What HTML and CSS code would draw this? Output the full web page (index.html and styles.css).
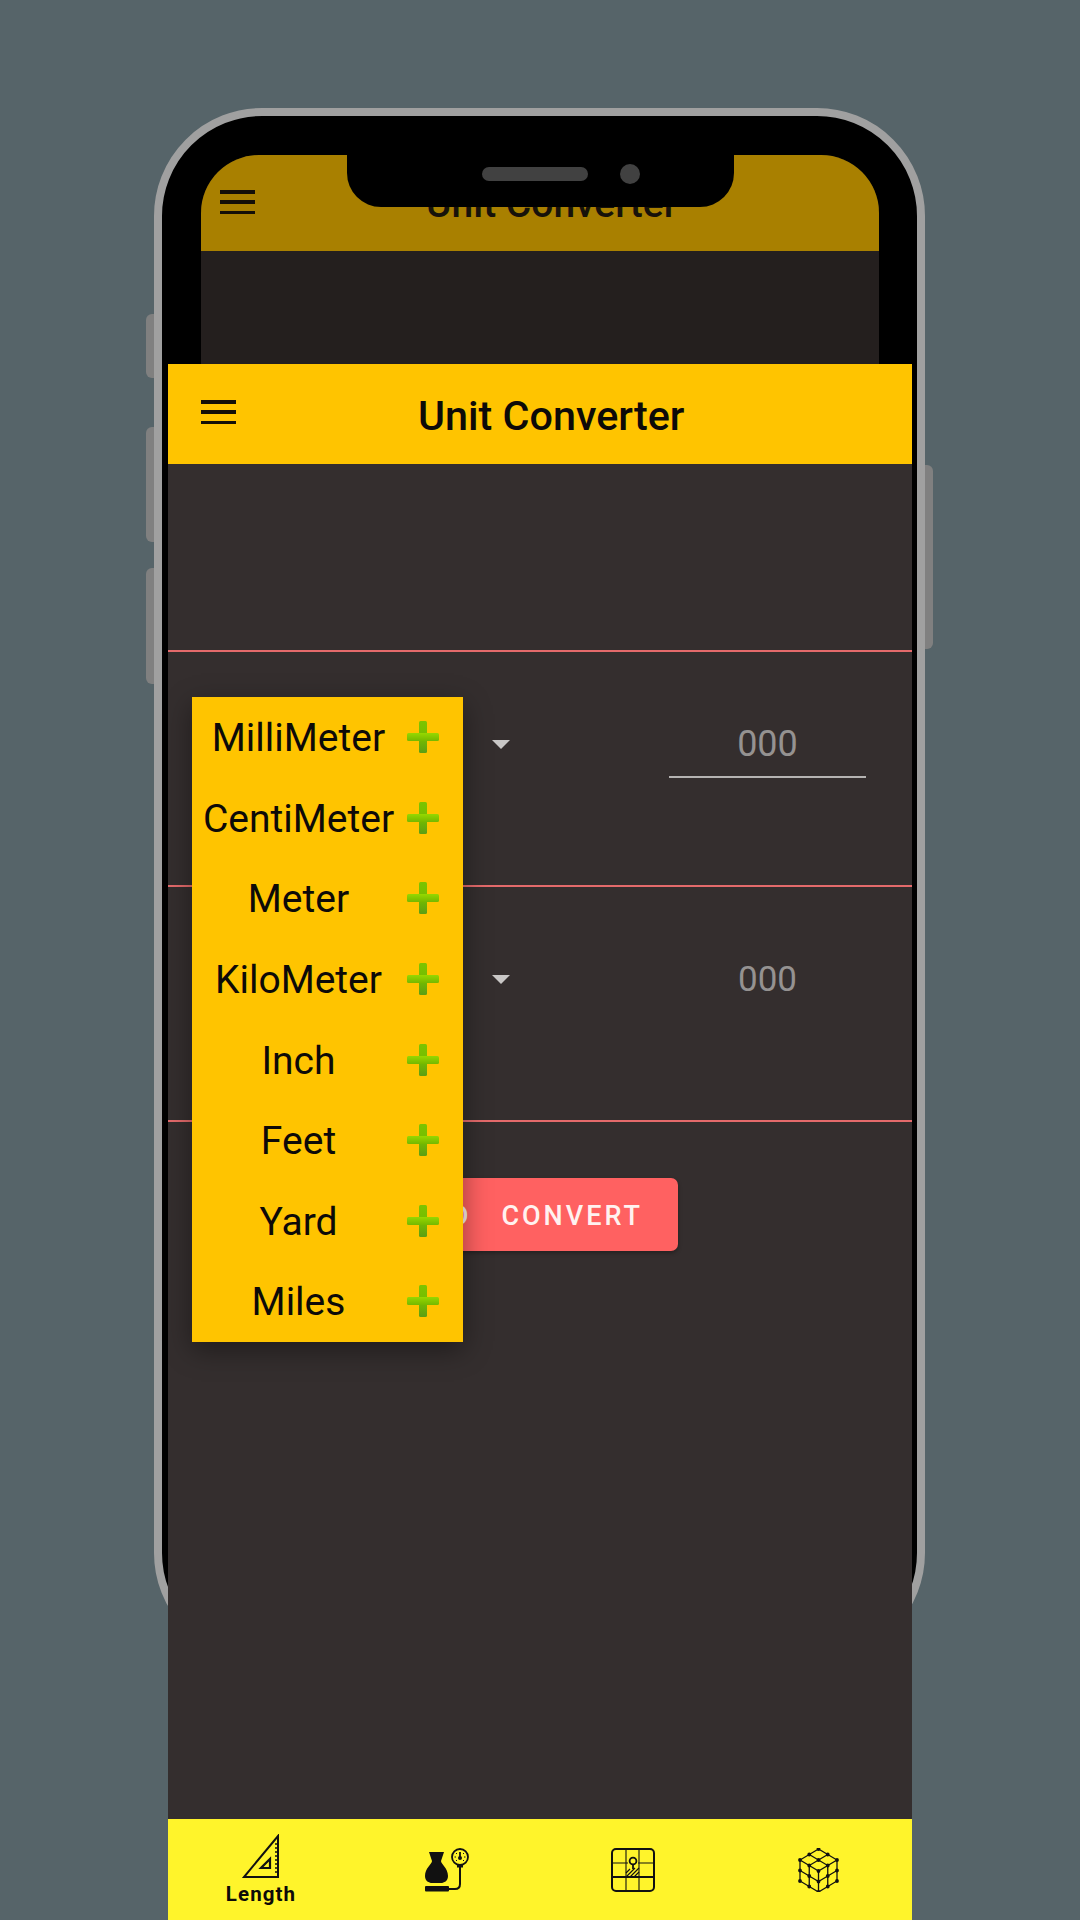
FILE: index.html

```html
<!DOCTYPE html>
<html lang="en">
<head>
    <meta charset="UTF-8">
    <meta name="viewport" content="width=device-width, initial-scale=1.0">
    <title>Unit Converter</title>
    <link rel="stylesheet" href="styles.css">
</head>
<body>
    <svg class="defs" width="0" height="0">
        <defs>
            <linearGradient id="plusV" x1="0" y1="0" x2="0" y2="1">
                <stop offset="0" stop-color="#7cc400"/>
                <stop offset="0.55" stop-color="#74bc00"/>
                <stop offset="1" stop-color="#5c9e14"/>
            </linearGradient>
            <linearGradient id="plusH" x1="0" y1="0" x2="0" y2="1">
                <stop offset="0" stop-color="#96d800"/>
                <stop offset="1" stop-color="#74b800"/>
            </linearGradient>
            <symbol id="plus" viewBox="0 0 32 32">
                <rect x="12" y="0" width="8" height="32" rx="1.5" fill="url(#plusV)"/>
                <rect x="0" y="12" width="32" height="8" rx="1.5" fill="url(#plusH)"/>
            </symbol>
        </defs>
    </svg>

    <span class="side-btn side-btn-mute"></span>
    <span class="side-btn side-btn-up"></span>
    <span class="side-btn side-btn-down"></span>
    <span class="side-btn side-btn-power"></span>

    <div class="phone">
        <div class="old-screen">
            <div class="old-bar">
                <div class="burger old-burger"><i></i><i></i><i></i></div>
                <div class="old-title">Unit Converter</div>
            </div>
        </div>
        <div class="notch">
            <span class="speaker"></span>
            <span class="camera"></span>
        </div>
    </div>

    <div class="app">
        <header class="app-bar">
            <div class="burger"><i></i><i></i><i></i></div>
            <h1 class="app-title">Unit Converter</h1>
        </header>

        <main class="content">
            <div class="unit-row">
                <span class="spin-arrow"></span>
                <div class="value value-edit">000</div>
            </div>
            <div class="unit-row">
                <span class="spin-arrow"></span>
                <div class="value">000</div>
            </div>
            <div class="unit-row unit-row-last">
                <button class="convert-btn"><span>ADD</span><span>CONVERT</span></button>
            </div>
        </main>

        <ul class="unit-menu">
            <li><span>MilliMeter</span><svg class="plus"><use href="#plus"/></svg></li>
            <li><span>CentiMeter</span><svg class="plus"><use href="#plus"/></svg></li>
            <li><span>Meter</span><svg class="plus"><use href="#plus"/></svg></li>
            <li><span>KiloMeter</span><svg class="plus"><use href="#plus"/></svg></li>
            <li><span>Inch</span><svg class="plus"><use href="#plus"/></svg></li>
            <li><span>Feet</span><svg class="plus"><use href="#plus"/></svg></li>
            <li><span>Yard</span><svg class="plus"><use href="#plus"/></svg></li>
            <li><span>Miles</span><svg class="plus"><use href="#plus"/></svg></li>
        </ul>

        <nav class="bottom-nav">
            <div class="nav-item">
                <svg class="nav-icon" viewBox="0 0 44 44">
                    <path d="M39 2V43H5Z" fill="none" stroke="#111" stroke-width="2"/>
                    <path d="M31 25V34H22Z" fill="none" stroke="#111" stroke-width="2.2"/>
                    <path d="M36 10h3M36 14h3M36 18h3M36 22h3M36 26h3M36 30h3M36 34h3M36 38h3" stroke="#111" stroke-width="1.5"/>
                </svg>
                <span class="nav-label">Length</span>
            </div>
            <div class="nav-item">
                <svg class="nav-icon" viewBox="0 0 44 44">
                    <path d="M4 4H19L16 13C16 16 23 20 23 28C23 33 19 35 16 35H7C4 35 0 33 0 28C0 20 7 16 7 13Z" fill="#111"/>
                    <rect x="0" y="38" width="24" height="5.500" rx="1" fill="#111"/>
                    <path d="M23 41H30C33 41 35 39 35 36V19" fill="none" stroke="#111" stroke-width="2"/>
                    <circle cx="35" cy="9" r="8" fill="none" stroke="#111" stroke-width="1.8"/>
                    <path d="M35 4V9" stroke="#111" stroke-width="1.8"/>
                    <circle cx="35" cy="10" r="2" fill="#111"/>
                    <path d="M29.500 9h1.500M39 9h1.500M31 5l1 1M39 5l-1 1M31 13l1-1M39 13l-1-1" stroke="#111" stroke-width="1"/>
                    <rect x="32" y="17" width="6" height="2.500" fill="#111"/>
                </svg>
            </div>
            <div class="nav-item">
                <svg class="nav-icon" viewBox="0 0 44 44">
                    <path d="M15 25l4-4M15 29l9-9M19 29l9-9M23 29l5-5" stroke="#111" stroke-width="1.2"/>
                    <path d="M15 1V43M28 1V43M1 15H17M27 15H43" fill="none" stroke="#111" stroke-width="1.1"/>
                    <path d="M1 29H43" stroke="#111" stroke-width="1.8"/>
                    <rect x="1" y="1" width="42" height="42" rx="4" fill="none" stroke="#111" stroke-width="2"/>
                    <circle cx="22" cy="13" r="3.400" fill="#fff42b" stroke="#111" stroke-width="1.8"/>
                    <path d="M22 16.500V21" stroke="#111" stroke-width="1.8"/>
                </svg>
            </div>
            <div class="nav-item">
                <svg class="nav-icon" viewBox="0 0 44 44">
                    <path d="M21.500 1L3 12V33L21.500 44L40 33V12ZM30.750 6.500L12.250 17.500V38.500M40 12L21.500 23V44M12.250 6.500L30.750 17.500V38.500M3 12L21.500 23L40 12M3 22.500L21.500 33.500L40 22.500" fill="none" stroke="#111" stroke-width="1.3"/>
                    <path d="M21.500 1h0M30.750 6.500h0M40 12h0M12.250 6.500h0M21.500 12h0M3 12h0M30.750 17.500h0M12.250 17.500h0M21.500 23h0M3 22.500h0M12.250 28h0M21.500 33.500h0M30.750 28h0M40 22.500h0M3 33h0M12.250 38.500h0M21.500 44h0M30.750 38.500h0M40 33h0" stroke="#111" stroke-width="3.800" stroke-linecap="round"/>
                </svg>
            </div>
        </nav>
    </div>
</body>
</html>
```

FILE: styles.css

```css
* {
    box-sizing: border-box;
}
html, body {
    margin: 0;
    padding: 0;
}
body {
    position: relative;
    width: 1080px;
    height: 1920px;
    overflow: hidden;
    background-color: #566469;
    font-family: Roboto, "Liberation Sans", sans-serif;
    color: #0d0a08;
}
.defs {
    position: absolute;
}

/* phone mockup */
.phone {
    position: relative;
    width: 771px;
    height: 1553px;
    margin: 108px 0 0 154px;
    padding: 39px 38px 39px 39px;
    background-color: #000;
    border: 8px solid #a0a0a0;
    border-radius: 108px;
}
.side-btn {
    position: absolute;
    width: 10px;
    background-color: #808080;
}
.side-btn-mute {
    left: 146px;
    top: 314px;
    height: 64px;
    border-radius: 6px 0 0 6px;
}
.side-btn-up {
    left: 146px;
    top: 427px;
    height: 115px;
    border-radius: 6px 0 0 6px;
}
.side-btn-down {
    left: 146px;
    top: 568px;
    height: 116px;
    border-radius: 6px 0 0 6px;
}
.side-btn-power {
    left: 923px;
    top: 465px;
    height: 184px;
    border-radius: 0 6px 6px 0;
}
.old-screen {
    height: 100%;
    background-color: #241f1e;
    border-radius: 58px;
    overflow: hidden;
}
.old-bar {
    position: relative;
    height: 96px;
    padding: 35px 0 0 19px;
    background-color: #a98000;
}
.old-burger {
    width: 34px;
    height: 23px;
}
.old-title {
    position: absolute;
    left: 225px;
    top: 26px;
    font-size: 39px;
    font-weight: 500;
    color: #17120a;
    white-space: nowrap;
}
.notch {
    position: absolute;
    left: 185px;
    top: 39px;
    width: 387px;
    height: 52px;
    background-color: #000;
    border-radius: 0 0 34px 34px;
}
.speaker {
    position: absolute;
    left: 135px;
    top: 12px;
    width: 106px;
    height: 14px;
    background-color: #414141;
    border-radius: 7px;
}
.camera {
    position: absolute;
    left: 273px;
    top: 9px;
    width: 20px;
    height: 20px;
    background-color: #414141;
    border-radius: 50%;
}
.burger {
    display: flex;
    flex-direction: column;
    justify-content: space-between;
    width: 35px;
    height: 24px;
}
.burger i {
    display: block;
    height: 3.5px;
    background-color: #140f08;
}

/* app on top of the phone */
.app {
    position: absolute;
    left: 168px;
    top: 364px;
    bottom: 0;
    width: 744px;
    display: flex;
    flex-direction: column;
    background-color: #342e2e;
}
.app-bar {
    display: flex;
    align-items: flex-start;
    height: 100px;
    padding: 36px 0 0 33px;
    background-color: #ffc400;
}
.app-title {
    margin: -11px 0 0 182px;
    font-size: 41.300px;
    line-height: 54px;
    font-weight: 500;
    white-space: nowrap;
}
.content {
    flex: 1;
    padding-top: 186px;
}
.unit-row {
    display: flex;
    align-items: center;
    height: 235px;
    padding: 0 46px 49px 324px;
    border-top: 2px solid #e46a6b;
}
.unit-row-last {
    justify-content: flex-end;
    align-items: flex-start;
    padding: 56px 234px 0 0;
}
.spin-arrow {
    width: 0;
    height: 0;
    border-left: 9px solid transparent;
    border-right: 9px solid transparent;
    border-top: 9px solid #c9c7c6;
}
.value {
    width: 197px;
    height: 67px;
    margin-left: auto;
    font-size: 35px;
    line-height: 67px;
    text-align: center;
    color: #959291;
}
.value-edit {
    border-bottom: 2px solid #b5b3b2;
    font-size: 36px;
}
.convert-btn {
    display: flex;
    gap: 30px;
    height: 73px;
    padding: 2px 35px 0 37px;
    align-items: center;
    background-color: #ff6161;
    border: none;
    border-radius: 7px;
    box-shadow: 0 2px 4px rgba(0,0,0,0.3);
    font-family: Roboto, "Liberation Sans", sans-serif;
    font-size: 27px;
    font-weight: 500;
    letter-spacing: 3px;
    color: #fff2f0;
}

/* popup list */
.unit-menu {
    position: absolute;
    left: 24px;
    top: 333px;
    width: 271px;
    margin: 0;
    padding: 0;
    list-style: none;
    background-color: #ffc400;
    box-shadow: 0 8px 26px rgba(0,0,0,0.4);
}
.unit-menu li {
    display: flex;
    align-items: center;
    height: 80.600px;
    padding-right: 24px;
    font-size: 39px;
}
.unit-menu li span {
    flex: 1;
    padding-top: 2px;
    text-align: center;
    white-space: nowrap;
}
.plus {
    flex: none;
    width: 32px;
    height: 32px;
    margin-left: 2px;
}

/* bottom navigation */
.bottom-nav {
    display: grid;
    grid-template-columns: repeat(4, 186px);
    height: 101px;
    background-color: #fff42b;
}
.nav-item {
    display: flex;
    flex-direction: column;
    align-items: center;
    justify-content: center;
}
.nav-icon {
    width: 44px;
    height: 44px;
}
.nav-label {
    margin-top: 4px;
    font-size: 20.500px;
    line-height: 24px;
    font-weight: 700;
    letter-spacing: 1.100px;
}
```
